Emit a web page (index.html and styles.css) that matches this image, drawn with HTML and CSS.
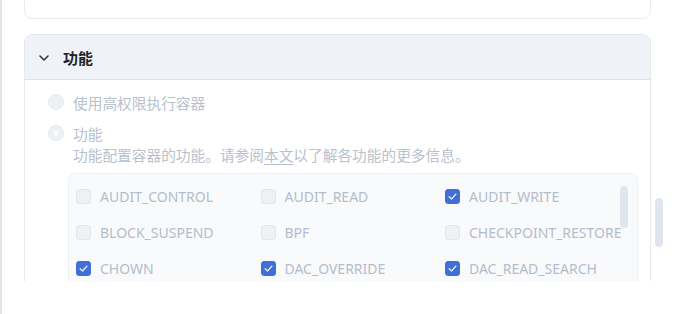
FILE: index.html
```html
<!DOCTYPE html>
<html lang="zh">
<head>
<meta charset="utf-8">
<link rel="stylesheet" href="styles.css">
</head>
<body>
<div class="edge"></div>
<div class="main">
  <div class="top-card"></div>
  <section class="card">
    <div class="card-head">
      <svg class="chev" width="10" height="6" viewBox="0 0 10 6"><path d="M1 1 L5 5 L9 1" fill="none" stroke="#2b2f36" stroke-width="1.5" stroke-linecap="round" stroke-linejoin="round"/></svg>
      <span class="card-title">功能</span>
    </div>
    <div class="card-body">
      <div class="radio-row"><span class="radio"></span><span class="cjk">使用高权限执行容器</span></div>
      <div class="radio-row second"><span class="radio on"></span><span class="cjk">功能</span></div>
      <div class="desc cjk">功能配置容器的功能。请参阅<span class="link">本文</span>以了解各功能的更多信息。</div>
      <div class="caps">
        <div class="caps-grid">
          <label class="cap"><span class="box"></span>AUDIT_CONTROL</label>
          <label class="cap"><span class="box"></span>AUDIT_READ</label>
          <label class="cap"><span class="box on"><svg viewBox="0 0 16 16" width="15" height="15"><path d="M4.5 8.2 L7 10.6 L11.5 5.6" fill="none" stroke="#dbe5fa" stroke-width="1.6" stroke-linecap="round" stroke-linejoin="round"/></svg></span>AUDIT_WRITE</label>
          <label class="cap"><span class="box"></span>BLOCK_SUSPEND</label>
          <label class="cap"><span class="box"></span>BPF</label>
          <label class="cap"><span class="box"></span>CHECKPOINT_RESTORE</label>
          <label class="cap"><span class="box on"><svg viewBox="0 0 16 16" width="15" height="15"><path d="M4.5 8.2 L7 10.6 L11.5 5.6" fill="none" stroke="#dbe5fa" stroke-width="1.6" stroke-linecap="round" stroke-linejoin="round"/></svg></span>CHOWN</label>
          <label class="cap"><span class="box on"><svg viewBox="0 0 16 16" width="15" height="15"><path d="M4.5 8.2 L7 10.6 L11.5 5.6" fill="none" stroke="#dbe5fa" stroke-width="1.6" stroke-linecap="round" stroke-linejoin="round"/></svg></span>DAC_OVERRIDE</label>
          <label class="cap"><span class="box on"><svg viewBox="0 0 16 16" width="15" height="15"><path d="M4.5 8.2 L7 10.6 L11.5 5.6" fill="none" stroke="#dbe5fa" stroke-width="1.6" stroke-linecap="round" stroke-linejoin="round"/></svg></span>DAC_READ_SEARCH</label>
        </div>
        <div class="inner-scroll"></div>
      </div>
    </div>
  </section>
  <div class="page-scroll"></div>
</div>
</body>
</html>
```
FILE: styles.css
```css
* { box-sizing: border-box; }
html, body { margin: 0; padding: 0; background: #fff; }
body {
  display: flex;
  height: 314px;
  overflow: hidden;
  font-family: "Noto Sans", "Noto Sans CJK SC", sans-serif;
  font-size: 14px;
}
.edge { width: 2px; background: #e3e3e3; flex: none; }
.main {
  position: relative;
  flex: 1;
  height: 281px;
  overflow: hidden;
  padding: 0 24px 0 22px;
}
.top-card {
  height: 29px;
  margin-top: -10px;
  border: 1px solid #e8ecf2;
  border-radius: 8px;
}
.card {
  margin-top: 15px;
  border: 1px solid #e4e8ef;
  border-radius: 8px;
  height: 400px;
  overflow: hidden;
}
.card-head {
  height: 45px;
  background: #eff2f7;
  border-bottom: 1px solid #dde2ea;
  display: flex;
  align-items: center;
  padding-left: 14px;
}
.chev { margin-right: 14px; margin-top: 1px; }
.card-title {
  font-family: "Noto Sans CJK SC", sans-serif;
  font-weight: 700;
  font-size: 15px;
  color: #1f2329;
}
.card-body { padding: 11px 12px 0 23px; }
.cjk { font-family: "Noto Sans CJK SC", sans-serif; font-size: 14.7px; }
.radio-row {
  display: flex;
  align-items: center;
  gap: 9px;
  height: 22px;
  color: #b9c1cd;
}
.radio-row.second { margin-top: 9px; }
.radio {
  width: 16px; height: 16px;
  border-radius: 50%;
  background: #edf0f5;
  border: 1px solid #e6eaf0;
  flex: none;
  display: flex; align-items: center; justify-content: center;
}
.radio.on::after {
  content: "";
  width: 6px; height: 6px;
  border-radius: 50%;
  background: #f8f9fb;
}
.desc {
  margin-left: 25px;
  line-height: 22px;
  color: #b9c1cd;
}
.link { text-decoration: underline; text-underline-offset: 3px; }
.caps {
  position: relative;
  margin: 7px 0 0 20px;
  height: 140px;
  overflow: hidden;
  background: #f9fafc;
  border: 1px solid #edf0f5;
  border-radius: 7px;
  padding: 4px 0 0 7px;
}
.caps-grid {
  display: grid;
  grid-template-columns: repeat(3, 184.5px);
  grid-auto-rows: 36px;
}
.cap {
  display: flex;
  align-items: center;
  gap: 9px;
  color: #b4bdcb;
  white-space: nowrap;
}
.box {
  width: 15px; height: 15px;
  border-radius: 3px;
  background: #eef0f4;
  border: 1px solid #e3e7ed;
  flex: none;
  display: flex;
}
.box.on { background: #3f6fd7; border-color: #3f6fd7; }
.box.on svg { margin: -1px; }
.inner-scroll {
  position: absolute;
  right: 9px;
  top: 12px;
  width: 8px;
  height: 42px;
  border-radius: 4px;
  background: #e1e6ee;
}
.page-scroll {
  position: absolute;
  left: 653px;
  top: 198px;
  width: 8px;
  height: 49px;
  border-radius: 4px;
  background: #e1e6ee;
}
```
